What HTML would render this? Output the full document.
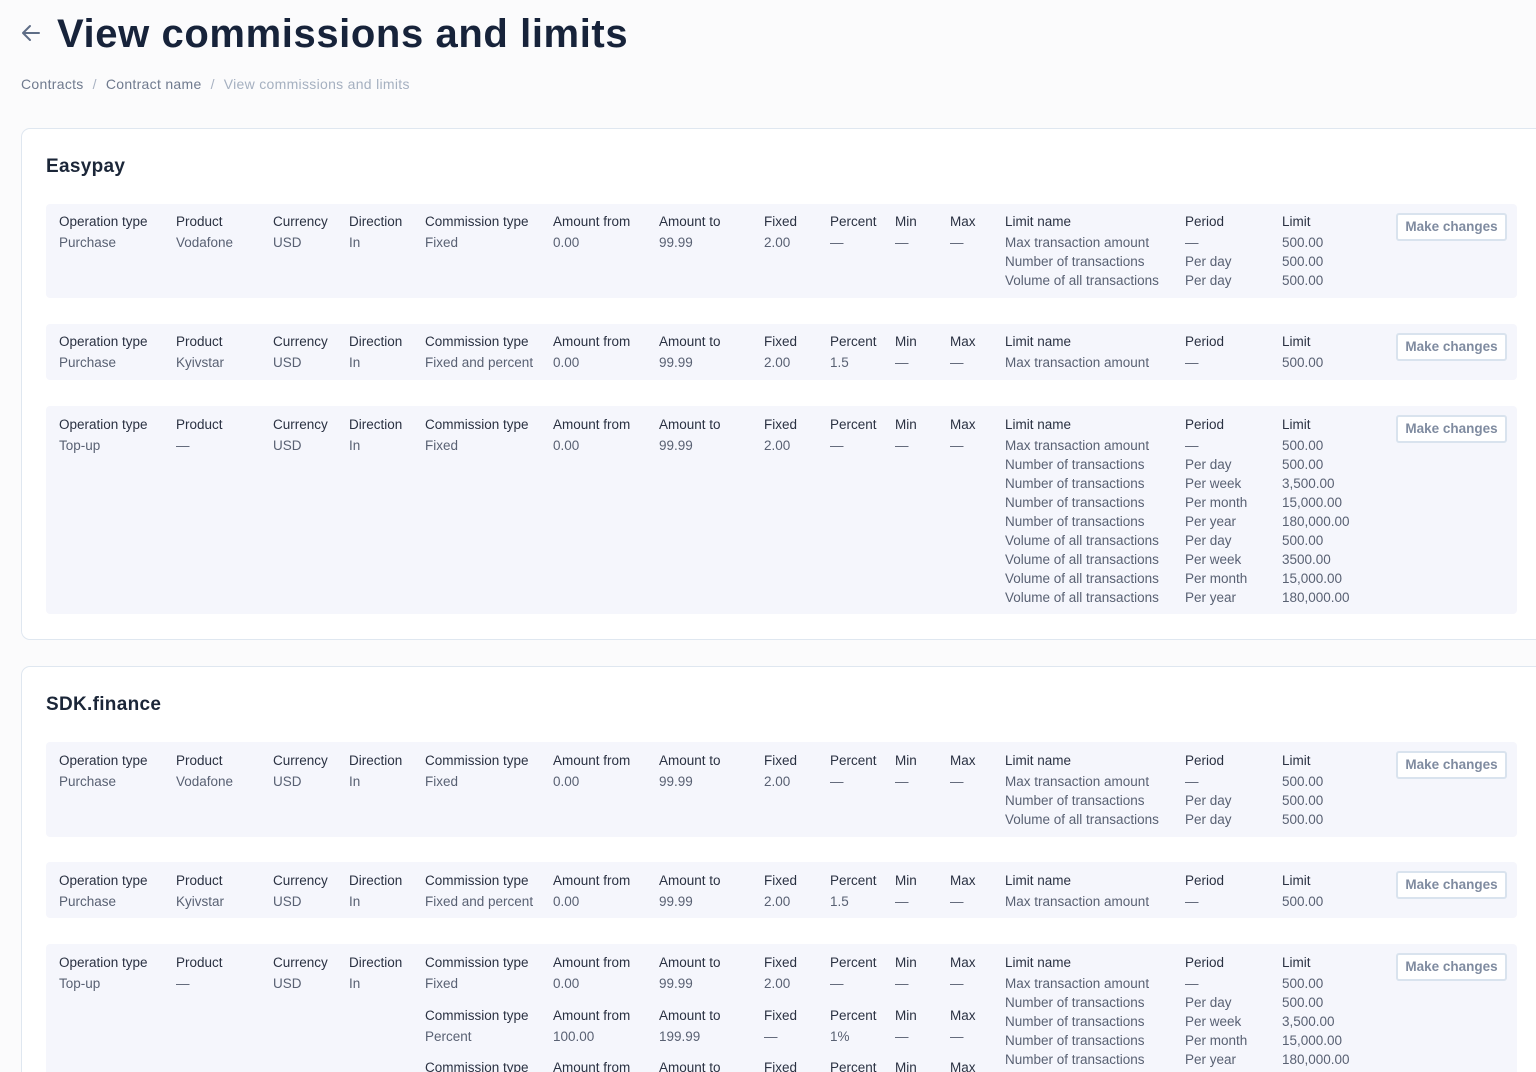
<!DOCTYPE html>
<html><head><meta charset="utf-8">
<style>
*{margin:0;padding:0;box-sizing:border-box}
html,body{width:1536px;height:1072px;overflow:hidden;background:#fbfbfc;font-family:"Liberation Sans",sans-serif;position:relative}
.h1{position:absolute;left:57px;top:12px;font-size:40px;font-weight:bold;color:#17233a;letter-spacing:0.6px}
.bc{position:absolute;left:21px;top:76px;font-size:14px;letter-spacing:0.3px;color:#6f7a8e}
.bc span.s{color:#a8b2c2;margin:0 9px}
.bc span.l{color:#a5b0c0}
.card{position:absolute;left:21px;width:1540px;background:#fff;border:1px solid #dfe7f0;border-radius:9px}
.ct{position:absolute;left:46px;font-size:19px;font-weight:bold;color:#1b2638;letter-spacing:0.3px}
.row{position:absolute;left:46px;width:1471px;background:#f5f6fc;border-radius:4px}
.c{position:absolute;font-size:13.5px;line-height:19px;color:#596173;white-space:nowrap}
.c b{display:block;font-weight:normal;color:#2a3142;margin-bottom:2px}
.btn{position:absolute;left:1350px;top:9px;width:111px;height:28px;border:2px solid #d9e3ee;border-radius:3px;background:#fff;color:#7f8ba0;font-size:13.5px;font-weight:bold;text-align:center;line-height:24px}
</style></head><body>
<svg style="position:absolute;left:20px;top:24px" width="22" height="18" viewBox="0 0 22 18"><path d="M19 9H3M10 2L3 9l7 7" fill="none" stroke="#5e6d86" stroke-width="2" stroke-linecap="round" stroke-linejoin="round"/></svg>
<div class="h1">View commissions and limits</div>
<div class="bc">Contracts<span class="s">/</span>Contract name<span class="s">/</span><span class="l">View commissions and limits</span></div>

<div class="card" style="top:128px;height:512px"></div>
<div class="ct" style="top:156px">Easypay</div>

<div class="row" style="top:204px;height:94px">
<div class="c" style="left:13px;top:8px"><b>Operation type</b>Purchase</div>
<div class="c" style="left:130px;top:8px"><b>Product</b>Vodafone</div>
<div class="c" style="left:227px;top:8px"><b>Currency</b>USD</div>
<div class="c" style="left:303px;top:8px"><b>Direction</b>In</div>
<div class="c" style="left:379px;top:8px"><b>Commission type</b>Fixed</div>
<div class="c" style="left:507px;top:8px"><b>Amount from</b>0.00</div>
<div class="c" style="left:613px;top:8px"><b>Amount to</b>99.99</div>
<div class="c" style="left:718px;top:8px"><b>Fixed</b>2.00</div>
<div class="c" style="left:784px;top:8px"><b>Percent</b>—</div>
<div class="c" style="left:849px;top:8px"><b>Min</b>—</div>
<div class="c" style="left:904px;top:8px"><b>Max</b>—</div>
<div class="c" style="left:959px;top:8px"><b>Limit name</b>Max transaction amount<br>Number of transactions<br>Volume of all transactions</div>
<div class="c" style="left:1139px;top:8px"><b>Period</b>—<br>Per day<br>Per day</div>
<div class="c" style="left:1236px;top:8px"><b>Limit</b>500.00<br>500.00<br>500.00</div>
<div class="btn">Make changes</div>
</div>

<div class="row" style="top:324px;height:56px">
<div class="c" style="left:13px;top:8px"><b>Operation type</b>Purchase</div>
<div class="c" style="left:130px;top:8px"><b>Product</b>Kyivstar</div>
<div class="c" style="left:227px;top:8px"><b>Currency</b>USD</div>
<div class="c" style="left:303px;top:8px"><b>Direction</b>In</div>
<div class="c" style="left:379px;top:8px"><b>Commission type</b>Fixed and percent</div>
<div class="c" style="left:507px;top:8px"><b>Amount from</b>0.00</div>
<div class="c" style="left:613px;top:8px"><b>Amount to</b>99.99</div>
<div class="c" style="left:718px;top:8px"><b>Fixed</b>2.00</div>
<div class="c" style="left:784px;top:8px"><b>Percent</b>1.5</div>
<div class="c" style="left:849px;top:8px"><b>Min</b>—</div>
<div class="c" style="left:904px;top:8px"><b>Max</b>—</div>
<div class="c" style="left:959px;top:8px"><b>Limit name</b>Max transaction amount</div>
<div class="c" style="left:1139px;top:8px"><b>Period</b>—</div>
<div class="c" style="left:1236px;top:8px"><b>Limit</b>500.00</div>
<div class="btn">Make changes</div>
</div>

<div class="row" style="top:406px;height:208px">
<div class="c" style="left:13px;top:9px"><b>Operation type</b>Top-up</div>
<div class="c" style="left:130px;top:9px"><b>Product</b>—</div>
<div class="c" style="left:227px;top:9px"><b>Currency</b>USD</div>
<div class="c" style="left:303px;top:9px"><b>Direction</b>In</div>
<div class="c" style="left:379px;top:9px"><b>Commission type</b>Fixed</div>
<div class="c" style="left:507px;top:9px"><b>Amount from</b>0.00</div>
<div class="c" style="left:613px;top:9px"><b>Amount to</b>99.99</div>
<div class="c" style="left:718px;top:9px"><b>Fixed</b>2.00</div>
<div class="c" style="left:784px;top:9px"><b>Percent</b>—</div>
<div class="c" style="left:849px;top:9px"><b>Min</b>—</div>
<div class="c" style="left:904px;top:9px"><b>Max</b>—</div>
<div class="c" style="left:959px;top:9px"><b>Limit name</b>Max transaction amount<br>Number of transactions<br>Number of transactions<br>Number of transactions<br>Number of transactions<br>Volume of all transactions<br>Volume of all transactions<br>Volume of all transactions<br>Volume of all transactions</div>
<div class="c" style="left:1139px;top:9px"><b>Period</b>—<br>Per day<br>Per week<br>Per month<br>Per year<br>Per day<br>Per week<br>Per month<br>Per year</div>
<div class="c" style="left:1236px;top:9px"><b>Limit</b>500.00<br>500.00<br>3,500.00<br>15,000.00<br>180,000.00<br>500.00<br>3500.00<br>15,000.00<br>180,000.00</div>
<div class="btn">Make changes</div>
</div>

<div class="card" style="top:666px;height:420px"></div>
<div class="ct" style="top:694px">SDK.finance</div>

<div class="row" style="top:742px;height:95px">
<div class="c" style="left:13px;top:9px"><b>Operation type</b>Purchase</div>
<div class="c" style="left:130px;top:9px"><b>Product</b>Vodafone</div>
<div class="c" style="left:227px;top:9px"><b>Currency</b>USD</div>
<div class="c" style="left:303px;top:9px"><b>Direction</b>In</div>
<div class="c" style="left:379px;top:9px"><b>Commission type</b>Fixed</div>
<div class="c" style="left:507px;top:9px"><b>Amount from</b>0.00</div>
<div class="c" style="left:613px;top:9px"><b>Amount to</b>99.99</div>
<div class="c" style="left:718px;top:9px"><b>Fixed</b>2.00</div>
<div class="c" style="left:784px;top:9px"><b>Percent</b>—</div>
<div class="c" style="left:849px;top:9px"><b>Min</b>—</div>
<div class="c" style="left:904px;top:9px"><b>Max</b>—</div>
<div class="c" style="left:959px;top:9px"><b>Limit name</b>Max transaction amount<br>Number of transactions<br>Volume of all transactions</div>
<div class="c" style="left:1139px;top:9px"><b>Period</b>—<br>Per day<br>Per day</div>
<div class="c" style="left:1236px;top:9px"><b>Limit</b>500.00<br>500.00<br>500.00</div>
<div class="btn">Make changes</div>
</div>

<div class="row" style="top:862px;height:56px">
<div class="c" style="left:13px;top:9px"><b>Operation type</b>Purchase</div>
<div class="c" style="left:130px;top:9px"><b>Product</b>Kyivstar</div>
<div class="c" style="left:227px;top:9px"><b>Currency</b>USD</div>
<div class="c" style="left:303px;top:9px"><b>Direction</b>In</div>
<div class="c" style="left:379px;top:9px"><b>Commission type</b>Fixed and percent</div>
<div class="c" style="left:507px;top:9px"><b>Amount from</b>0.00</div>
<div class="c" style="left:613px;top:9px"><b>Amount to</b>99.99</div>
<div class="c" style="left:718px;top:9px"><b>Fixed</b>2.00</div>
<div class="c" style="left:784px;top:9px"><b>Percent</b>1.5</div>
<div class="c" style="left:849px;top:9px"><b>Min</b>—</div>
<div class="c" style="left:904px;top:9px"><b>Max</b>—</div>
<div class="c" style="left:959px;top:9px"><b>Limit name</b>Max transaction amount</div>
<div class="c" style="left:1139px;top:9px"><b>Period</b>—</div>
<div class="c" style="left:1236px;top:9px"><b>Limit</b>500.00</div>
<div class="btn">Make changes</div>
</div>

<div class="row" style="top:944px;height:128px;overflow:hidden;border-radius:4px 4px 0 0">
<div class="c" style="left:13px;top:9px"><b>Operation type</b>Top-up</div>
<div class="c" style="left:130px;top:9px"><b>Product</b>—</div>
<div class="c" style="left:227px;top:9px"><b>Currency</b>USD</div>
<div class="c" style="left:303px;top:9px"><b>Direction</b>In</div>
<div class="c" style="left:379px;top:9px"><b>Commission type</b>Fixed</div>
<div class="c" style="left:507px;top:9px"><b>Amount from</b>0.00</div>
<div class="c" style="left:613px;top:9px"><b>Amount to</b>99.99</div>
<div class="c" style="left:718px;top:9px"><b>Fixed</b>2.00</div>
<div class="c" style="left:784px;top:9px"><b>Percent</b>—</div>
<div class="c" style="left:849px;top:9px"><b>Min</b>—</div>
<div class="c" style="left:904px;top:9px"><b>Max</b>—</div>
<div class="c" style="left:379px;top:62px"><b>Commission type</b>Percent</div>
<div class="c" style="left:507px;top:62px"><b>Amount from</b>100.00</div>
<div class="c" style="left:613px;top:62px"><b>Amount to</b>199.99</div>
<div class="c" style="left:718px;top:62px"><b>Fixed</b>—</div>
<div class="c" style="left:784px;top:62px"><b>Percent</b>1%</div>
<div class="c" style="left:849px;top:62px"><b>Min</b>—</div>
<div class="c" style="left:904px;top:62px"><b>Max</b>—</div>
<div class="c" style="left:379px;top:114px"><b>Commission type</b></div>
<div class="c" style="left:507px;top:114px"><b>Amount from</b></div>
<div class="c" style="left:613px;top:114px"><b>Amount to</b></div>
<div class="c" style="left:718px;top:114px"><b>Fixed</b></div>
<div class="c" style="left:784px;top:114px"><b>Percent</b></div>
<div class="c" style="left:849px;top:114px"><b>Min</b></div>
<div class="c" style="left:904px;top:114px"><b>Max</b></div>
<div class="c" style="left:959px;top:9px"><b>Limit name</b>Max transaction amount<br>Number of transactions<br>Number of transactions<br>Number of transactions<br>Number of transactions</div>
<div class="c" style="left:1139px;top:9px"><b>Period</b>—<br>Per day<br>Per week<br>Per month<br>Per year</div>
<div class="c" style="left:1236px;top:9px"><b>Limit</b>500.00<br>500.00<br>3,500.00<br>15,000.00<br>180,000.00</div>
<div class="btn">Make changes</div>
</div>
</body></html>
